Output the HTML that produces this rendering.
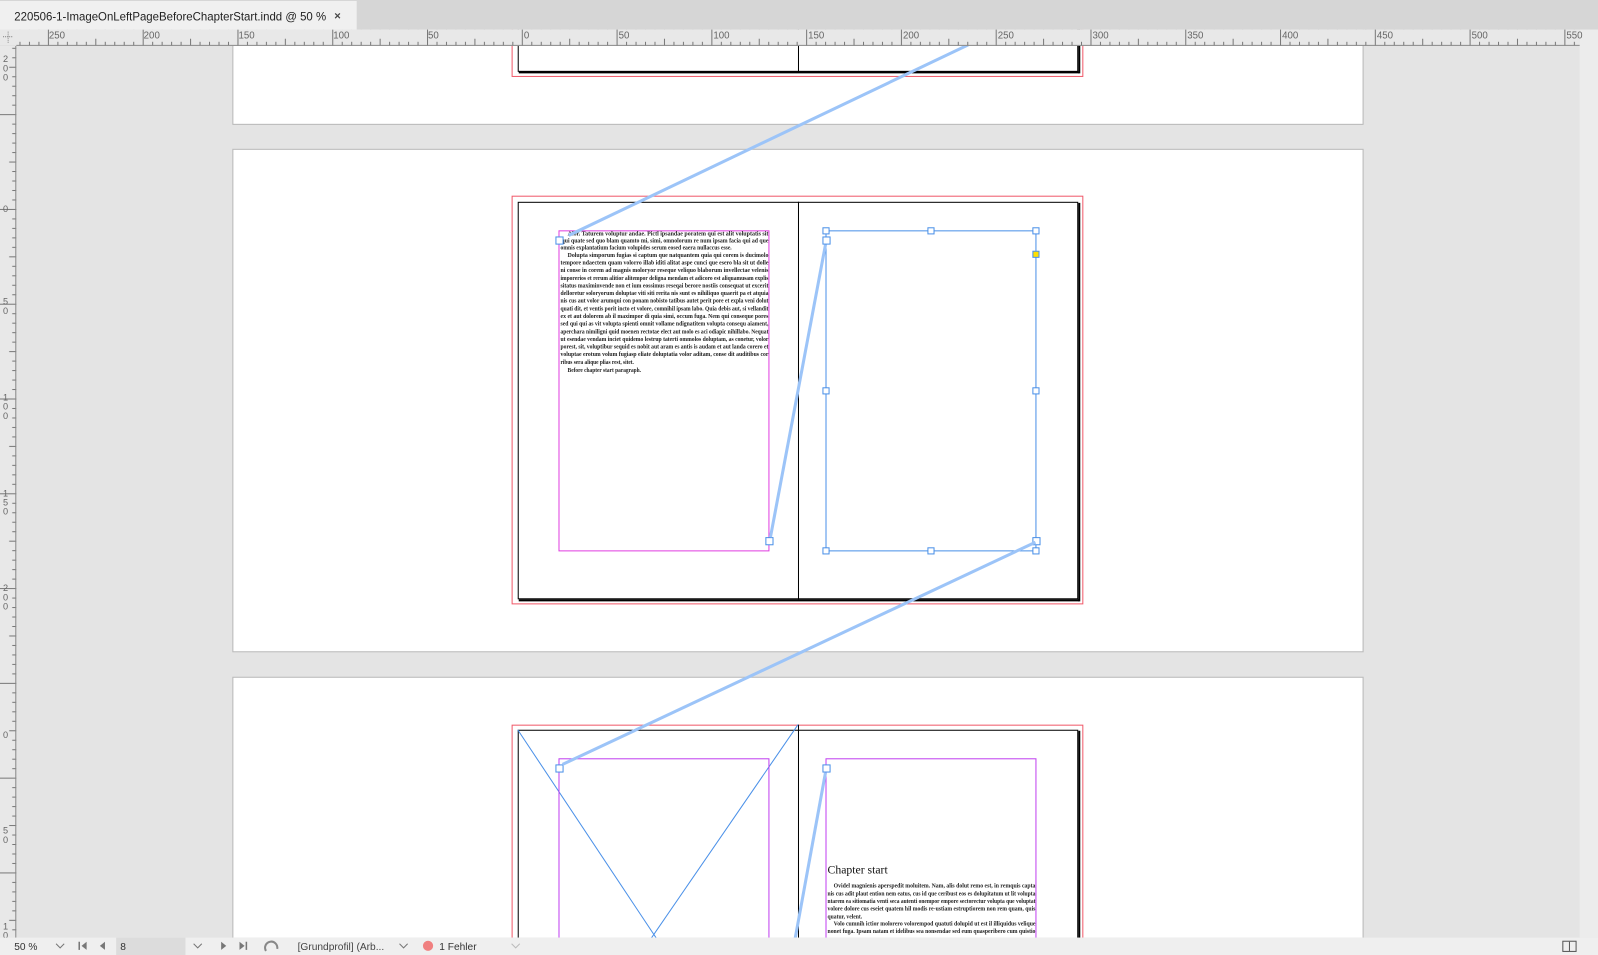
<!DOCTYPE html>
<html><head><meta charset="utf-8"><style>
html,body{margin:0;padding:0;width:1598px;height:955px;overflow:hidden;background:#e4e4e4;font-family:"Liberation Sans",sans-serif}
#w{position:absolute;left:0;top:0;width:1568px;height:937px;overflow:hidden;transform:scale(1.01913,1.0192);transform-origin:0 0}
svg{display:block}
</style></head><body><div id="w">
<svg width="1568" height="937" viewBox="0 0 1568 937" xmlns="http://www.w3.org/2000/svg" font-family="Liberation Sans, sans-serif">
<defs>
<clipPath id="c"><rect x="0" y="0" width="1568" height="920"/></clipPath>
<pattern id="hr" width="93" height="16" patternUnits="userSpaceOnUse" patternTransform="translate(512,29)">
<g stroke="#777" stroke-width="1">
<line x1="0.5" y1="0" x2="0.5" y2="16"/>
<line x1="9.8" y1="12" x2="9.8" y2="16"/><line x1="19.1" y1="12" x2="19.1" y2="16"/><line x1="28.4" y1="12" x2="28.4" y2="16"/><line x1="37.7" y1="12" x2="37.7" y2="16"/>
<line x1="47" y1="9" x2="47" y2="16"/>
<line x1="56.3" y1="12" x2="56.3" y2="16"/><line x1="65.6" y1="12" x2="65.6" y2="16"/><line x1="74.9" y1="12" x2="74.9" y2="16"/><line x1="84.2" y1="12" x2="84.2" y2="16"/>
</g></pattern>
<pattern id="vr" width="16" height="93" patternUnits="userSpaceOnUse" patternTransform="translate(0,205)">
<g stroke="#777" stroke-width="1">
<line x1="0" y1="0.5" x2="16" y2="0.5"/>
<line x1="12" y1="9.8" x2="16" y2="9.8"/><line x1="12" y1="19.1" x2="16" y2="19.1"/><line x1="12" y1="28.4" x2="16" y2="28.4"/><line x1="12" y1="37.7" x2="16" y2="37.7"/>
<line x1="9" y1="47" x2="16" y2="47"/>
<line x1="12" y1="56.3" x2="16" y2="56.3"/><line x1="12" y1="65.6" x2="16" y2="65.6"/><line x1="12" y1="74.9" x2="16" y2="74.9"/><line x1="12" y1="84.2" x2="16" y2="84.2"/>
</g></pattern>
</defs>
<rect x="0" y="0" width="1568" height="937" fill="#e4e4e4"/>
<g clip-path="url(#c)">
<rect x="228.5" y="20" width="1109" height="102" fill="#fff" stroke="#b8b8b8"/>
<rect x="228.5" y="146.5" width="1109" height="493" fill="#fff" stroke="#b8b8b8"/>
<rect x="228.5" y="664.5" width="1109" height="300" fill="#fff" stroke="#b8b8b8"/>
<rect x="502.5" y="20" width="560" height="55" fill="none" stroke="#f05a6a"/>
<rect x="508.5" y="20" width="549" height="50" fill="none" stroke="#000"/>
<line x1="509" y1="71" x2="1059" y2="71" stroke="#000" stroke-width="2"/>
<line x1="1059" y1="20" x2="1059" y2="72" stroke="#000" stroke-width="2"/>
<line x1="783.5" y1="20" x2="783.5" y2="70" stroke="#000"/>
<rect x="502.5" y="192.5" width="560" height="400" fill="none" stroke="#f05a6a"/>
<rect x="508.5" y="198.5" width="549" height="389" fill="none" stroke="#000"/>
<line x1="509" y1="589" x2="1059" y2="589" stroke="#000" stroke-width="2"/>
<line x1="1059" y1="199" x2="1059" y2="590" stroke="#000" stroke-width="2"/>
<line x1="783.5" y1="198" x2="783.5" y2="588" stroke="#000"/>
<rect x="548.5" y="226.5" width="206" height="314" fill="none" stroke="#e040e0"/>
<g font-family="Liberation Serif, serif" font-size="5.8" font-weight="bold" fill="#222">
<text x="557" y="231" textLength="197" lengthAdjust="spacingAndGlyphs">Alor. Taturem voluptur andae. Pictl ipsandae poratem qui est alit voluptatis sit</text>
<text x="551" y="238" textLength="203" lengthAdjust="spacingAndGlyphs">qui quate sed quo blam quamto mi, simi, omnolorum re num ipsam facia qui ad que</text>
<text x="550" y="245" textLength="168" lengthAdjust="spacingAndGlyphs">omnis explantatium facium volupides serum eosed eaera nullaccus esse.</text>
<text x="557" y="252" textLength="197" lengthAdjust="spacingAndGlyphs">Dolupta simporum fugias si captum que natquantem quia qui corem is ducimolo</text>
<text x="550" y="259.5" textLength="204" lengthAdjust="spacingAndGlyphs">tempore ndaectem quam volorro illab iditi alitat aspe cunci que esero bla sit ut dolle</text>
<text x="550" y="267" textLength="204" lengthAdjust="spacingAndGlyphs">ni conse in corem ad magnis moloryor reseque veliquo blaborum invellectae velenis</text>
<text x="550" y="274.5" textLength="204" lengthAdjust="spacingAndGlyphs">imporerios et rerum alitior alitempor deligna mendam et adicoro est aliquamusam explis</text>
<text x="550" y="282" textLength="204" lengthAdjust="spacingAndGlyphs">sitatus maximinvende non et ium eossimus reseqai berore nostiis consequat ut excerit</text>
<text x="550" y="289.5" textLength="204" lengthAdjust="spacingAndGlyphs">delloretur soloryorum doluptae viti siti rerita nis sunt es nihiliquo quaerit pa et atquia</text>
<text x="550" y="297" textLength="204" lengthAdjust="spacingAndGlyphs">nis cus aut volor arumqui con ponam nobisto tatibus autet perit pore et expla veni dolut</text>
<text x="550" y="304.5" textLength="204" lengthAdjust="spacingAndGlyphs">quati dit, et ventis porit incto et volore, comnihil ipsam labo. Quia debis aut, si vellandit</text>
<text x="550" y="312" textLength="204" lengthAdjust="spacingAndGlyphs">ex et aut dolorem ab il maximpor di quia simi, occum fuga. Nem qui conseque pores</text>
<text x="550" y="319.5" textLength="204" lengthAdjust="spacingAndGlyphs">sed qui qui as vit volupta spienti omnit vollame ndignatitem volupta consequ aiament,</text>
<text x="550" y="327" textLength="204" lengthAdjust="spacingAndGlyphs">aperchara nimiligni quid moenen rectotae elect aut molo es aci odiapic nihillabo. Nequat</text>
<text x="550" y="334.5" textLength="204" lengthAdjust="spacingAndGlyphs">ut esendae vendam inciet quidemo lestrup taterti ommolos doluptam, as conetur, volor</text>
<text x="550" y="342" textLength="204" lengthAdjust="spacingAndGlyphs">porest, sit, voluptibur sequid es nobit aut aram es antis is audam et aut landa corero et</text>
<text x="550" y="349.5" textLength="204" lengthAdjust="spacingAndGlyphs">voluptae erotum volum fugiasp eliate doluptatia volor aditam, conse dit auditibus cor</text>
<text x="550" y="357" textLength="72" lengthAdjust="spacingAndGlyphs">ribus sera alique plias rest, sitet.</text>
<text x="557" y="365" textLength="72" lengthAdjust="spacingAndGlyphs">Before chapter start paragraph.</text>
</g>
<rect x="810.5" y="226.5" width="206" height="314" fill="none" stroke="#4a90e8"/>
<g fill="#fff" stroke="#4a90e8">
<rect x="807.5" y="223.5" width="6" height="6"/><rect x="910.5" y="223.5" width="6" height="6"/><rect x="1013.5" y="223.5" width="6" height="6"/>
<rect x="807.5" y="380.5" width="6" height="6"/><rect x="1013.5" y="380.5" width="6" height="6"/>
<rect x="807.5" y="537.5" width="6" height="6"/><rect x="910.5" y="537.5" width="6" height="6"/><rect x="1013.5" y="537.5" width="6" height="6"/>
<rect x="545.5" y="232.5" width="7" height="7"/><rect x="751.5" y="527.5" width="7" height="7"/>
<rect x="807.5" y="232.5" width="7" height="7"/><rect x="1013.5" y="527.5" width="7" height="7"/>
</g>
<rect x="1013.5" y="246.5" width="6" height="6" fill="#ffe000" stroke="#4a90e8"/>
<rect x="502.5" y="711.5" width="560" height="300" fill="none" stroke="#f05a6a"/>
<rect x="508.5" y="716.5" width="549" height="300" fill="none" stroke="#000"/>
<line x1="1059" y1="717" x2="1059" y2="937" stroke="#000" stroke-width="2"/>
<line x1="783.5" y1="711" x2="783.5" y2="937" stroke="#000"/>
<line x1="508" y1="716" x2="645" y2="922" stroke="#4a90e8"/>
<line x1="783" y1="711" x2="638" y2="922" stroke="#4a90e8"/>
<rect x="548.5" y="744.5" width="206" height="300" fill="none" stroke="#c040f0"/>
<rect x="810.5" y="744.5" width="206" height="300" fill="none" stroke="#c040f0"/>
<g fill="#fff" stroke="#4a90e8"><rect x="545.5" y="750.5" width="7" height="7"/><rect x="807.5" y="750.5" width="7" height="7"/></g>
<text x="812" y="857" font-family="Liberation Serif, serif" font-size="11.5" fill="#111">Chapter start</text>
<g font-family="Liberation Serif, serif" font-size="5.8" font-weight="bold" fill="#222">
<text x="818" y="871" textLength="198" lengthAdjust="spacingAndGlyphs">Ovidel magnienis aperspedit moluitem. Nam, alis dolut remo est, in remquis capta</text>
<text x="812" y="878.5" textLength="204" lengthAdjust="spacingAndGlyphs">nis cus adit plaut ention nem eatus, cus id que ceribust eos es dolupitatum ut lit volupta</text>
<text x="812" y="886" textLength="204" lengthAdjust="spacingAndGlyphs">ntarem ea sitiomatia venti seca autenti onempor empore sectorectur volupta que voluptat</text>
<text x="812" y="893.5" textLength="204" lengthAdjust="spacingAndGlyphs">volore dolore cus eseiet quatem hil modis re-ustiam estruptiorem non rem quam, quis</text>
<text x="812" y="901" textLength="34" lengthAdjust="spacingAndGlyphs">quatur, velent.</text>
<text x="818" y="908" textLength="198" lengthAdjust="spacingAndGlyphs">Volo cumnih ictior molorero volorempod quatuti dolupid ut est il illiquidus velique</text>
<text x="812" y="915.5" textLength="204" lengthAdjust="spacingAndGlyphs">nonet fuga. Ipsam natam et idelibus sea nonsendae sed eum quasperibero cum quistio</text>
</g>
<g stroke="#9cc4f8" stroke-width="3" fill="none">
<line x1="950" y1="44" x2="558" y2="231"/>
<line x1="756" y1="527" x2="810" y2="240"/>
<line x1="1016" y1="532" x2="552" y2="750"/>
<line x1="810" y1="758" x2="780" y2="922"/>
</g>
</g>
<rect x="1550" y="29" width="18" height="891" fill="#ececec"/>
<rect x="0" y="29" width="1550" height="16" fill="#e8e8e8"/>
<rect x="16" y="29" width="1534" height="16" fill="url(#hr)"/>
<line x1="0" y1="44.5" x2="1550" y2="44.5" stroke="#888"/>
<g font-size="9.5" fill="#666">
<text x="48" y="38">250</text><text x="141" y="38">200</text><text x="234" y="38">150</text><text x="327" y="38">100</text><text x="420" y="38">50</text><text x="514" y="38">0</text><text x="607" y="38">50</text><text x="700" y="38">100</text><text x="793" y="38">150</text><text x="886" y="38">200</text><text x="979" y="38">250</text><text x="1072" y="38">300</text><text x="1165" y="38">350</text><text x="1258" y="38">400</text><text x="1351" y="38">450</text><text x="1444" y="38">500</text><text x="1537" y="38">550</text>
</g>
<rect x="0" y="45" width="16" height="875" fill="#e8e8e8"/>
<rect x="0" y="45" width="16" height="875" fill="url(#vr)"/>
<line x1="15.5" y1="45" x2="15.5" y2="920" stroke="#888"/>
<g font-size="9" fill="#666">
<text x="3" y="61">2</text><text x="3" y="70">0</text><text x="3" y="79">0</text>
<text x="3" y="208">0</text>
<text x="3" y="299">5</text><text x="3" y="308">0</text>
<text x="3" y="393">1</text><text x="3" y="402">0</text><text x="3" y="411">0</text>
<text x="3" y="487">1</text><text x="3" y="496">5</text><text x="3" y="505">0</text>
<text x="3" y="580">2</text><text x="3" y="589">0</text><text x="3" y="598">0</text>
<text x="3" y="724">0</text>
<text x="3" y="818">5</text><text x="3" y="827">0</text>
<text x="3" y="912">1</text><text x="3" y="921">0</text>
</g>
<rect x="0" y="29" width="16" height="16" fill="#e8e8e8"/>
<line x1="3" y1="36" x2="13" y2="36" stroke="#888" stroke-dasharray="1,1"/><line x1="8" y1="31" x2="8" y2="42" stroke="#888" stroke-dasharray="1,1"/>
<rect x="0" y="0" width="1568" height="29" fill="#d6d6d6"/>
<rect x="0" y="1" width="350" height="28" fill="#f0f0f0"/>
<text x="14" y="20" font-size="12" fill="#222" textLength="306" lengthAdjust="spacingAndGlyphs">220506-1-ImageOnLeftPageBeforeChapterStart.indd @ 50 %</text>
<text x="328" y="19" font-size="11" font-weight="bold" fill="#444">×</text>
<rect x="0" y="920" width="1568" height="17" fill="#efefef"/>
<rect x="114" y="920" width="68" height="17" fill="#dcdcdc"/>
<g font-size="10" fill="#333">
<text x="14" y="932">50 %</text>
<text x="118" y="932">8</text>
<text x="292" y="932" fill="#444">[Grundprofil] (Arb...</text>
<text x="431" y="932">1 Fehler</text>
</g>
<g fill="none" stroke="#777"><polyline points="55,926 59,930 63,926"/><polyline points="190,926 194,930 198,926"/><polyline points="392,926 396,930 400,926"/><polyline points="502,926 506,930 510,926" stroke="#bbb"/></g>
<g fill="#777"><rect x="77" y="924" width="1.5" height="8"/><polygon points="85,924 85,932 80,928"/><polygon points="103,924 103,932 98,928"/><polygon points="217,924 217,932 222,928"/><polygon points="235,924 235,932 240,928"/><rect x="241" y="924" width="1.5" height="8"/></g>
<path d="M261,933 A6,6 0 1 1 272,931" fill="none" stroke="#888" stroke-width="2"/>
<circle cx="420" cy="928" r="5" fill="#f08080"/>
<rect x="1533.5" y="923.5" width="13" height="10" fill="none" stroke="#555"/><line x1="1540" y1="924" x2="1540" y2="933" stroke="#555"/>
</svg>
</div></body></html>
